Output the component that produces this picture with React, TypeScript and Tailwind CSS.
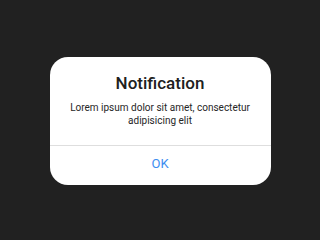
import React from "react";

export default function App() {
  return (
    <div className="w-[320px] h-[240px] bg-[#212121] flex items-center justify-center" style={{ fontFamily: "Roboto, 'Liberation Sans', sans-serif" }}>
      <div className="w-[221px] h-[128px] mt-[1px] bg-white rounded-[18px] flex flex-col overflow-hidden">
        <div className="h-[88px] flex flex-col items-center pt-[16px]">
          <div className="text-[17px] leading-[20px] font-medium text-[#202020]">Notification</div>
          <div className="mt-[8px] text-[10px] leading-[13px] text-[#262626] text-center whitespace-nowrap">
            Lorem ipsum dolor sit amet, consectetur
            <br />
            adipisicing elit
          </div>
        </div>
        <div className="h-[1px] bg-[#dedede]" />
        <div className="flex-1 flex justify-center pt-[10px] text-[13px] leading-[16px] text-[#3d8ef0]">OK</div>
      </div>
    </div>
  );
}
